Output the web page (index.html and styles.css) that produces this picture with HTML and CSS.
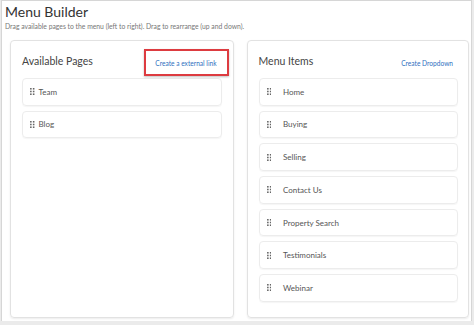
FILE: index.html
```html
<!DOCTYPE html>
<html>
<head>
<meta charset="utf-8">
<link rel="stylesheet" href="styles.css">
</head>
<body>
<div class="frame">
  <h1 class="title">Menu Builder</h1>
  <p class="subtitle">Drag available pages to the menu (left to right). Drag to rearrange (up and down).</p>
  <div class="columns">
    <section class="card">
      <div class="card-head">
        <h2 class="card-title">Available Pages</h2>
        <a class="link highlighted">Create a external link</a>
      </div>
      <ul class="list">
        <li class="item"><svg class="grip" viewBox="0 0 5 8"><rect x="0" y="0" width="1.8" height="1.8"/><rect x="3.2" y="0" width="1.8" height="1.8"/><rect x="0" y="3.1" width="1.8" height="1.8"/><rect x="3.2" y="3.1" width="1.8" height="1.8"/><rect x="0" y="6.2" width="1.8" height="1.8"/><rect x="3.2" y="6.2" width="1.8" height="1.8"/></svg><span>Team</span></li>
        <li class="item"><svg class="grip" viewBox="0 0 5 8"><rect x="0" y="0" width="1.8" height="1.8"/><rect x="3.2" y="0" width="1.8" height="1.8"/><rect x="0" y="3.1" width="1.8" height="1.8"/><rect x="3.2" y="3.1" width="1.8" height="1.8"/><rect x="0" y="6.2" width="1.8" height="1.8"/><rect x="3.2" y="6.2" width="1.8" height="1.8"/></svg><span>Blog</span></li>
      </ul>
    </section>
    <section class="card card-right">
      <div class="card-head">
        <h2 class="card-title">Menu Items</h2>
        <a class="link">Create Dropdown</a>
      </div>
      <ul class="list list-menu">
        <li class="item"><svg class="grip" viewBox="0 0 5 8"><rect x="0" y="0" width="1.8" height="1.8"/><rect x="3.2" y="0" width="1.8" height="1.8"/><rect x="0" y="3.1" width="1.8" height="1.8"/><rect x="3.2" y="3.1" width="1.8" height="1.8"/><rect x="0" y="6.2" width="1.8" height="1.8"/><rect x="3.2" y="6.2" width="1.8" height="1.8"/></svg><span>Home</span></li>
        <li class="item"><svg class="grip" viewBox="0 0 5 8"><rect x="0" y="0" width="1.8" height="1.8"/><rect x="3.2" y="0" width="1.8" height="1.8"/><rect x="0" y="3.1" width="1.8" height="1.8"/><rect x="3.2" y="3.1" width="1.8" height="1.8"/><rect x="0" y="6.2" width="1.8" height="1.8"/><rect x="3.2" y="6.2" width="1.8" height="1.8"/></svg><span>Buying</span></li>
        <li class="item"><svg class="grip" viewBox="0 0 5 8"><rect x="0" y="0" width="1.8" height="1.8"/><rect x="3.2" y="0" width="1.8" height="1.8"/><rect x="0" y="3.1" width="1.8" height="1.8"/><rect x="3.2" y="3.1" width="1.8" height="1.8"/><rect x="0" y="6.2" width="1.8" height="1.8"/><rect x="3.2" y="6.2" width="1.8" height="1.8"/></svg><span>Selling</span></li>
        <li class="item"><svg class="grip" viewBox="0 0 5 8"><rect x="0" y="0" width="1.8" height="1.8"/><rect x="3.2" y="0" width="1.8" height="1.8"/><rect x="0" y="3.1" width="1.8" height="1.8"/><rect x="3.2" y="3.1" width="1.8" height="1.8"/><rect x="0" y="6.2" width="1.8" height="1.8"/><rect x="3.2" y="6.2" width="1.8" height="1.8"/></svg><span>Contact Us</span></li>
        <li class="item"><svg class="grip" viewBox="0 0 5 8"><rect x="0" y="0" width="1.8" height="1.8"/><rect x="3.2" y="0" width="1.8" height="1.8"/><rect x="0" y="3.1" width="1.8" height="1.8"/><rect x="3.2" y="3.1" width="1.8" height="1.8"/><rect x="0" y="6.2" width="1.8" height="1.8"/><rect x="3.2" y="6.2" width="1.8" height="1.8"/></svg><span>Property Search</span></li>
        <li class="item"><svg class="grip" viewBox="0 0 5 8"><rect x="0" y="0" width="1.8" height="1.8"/><rect x="3.2" y="0" width="1.8" height="1.8"/><rect x="0" y="3.1" width="1.8" height="1.8"/><rect x="3.2" y="3.1" width="1.8" height="1.8"/><rect x="0" y="6.2" width="1.8" height="1.8"/><rect x="3.2" y="6.2" width="1.8" height="1.8"/></svg><span>Testimonials</span></li>
        <li class="item"><svg class="grip" viewBox="0 0 5 8"><rect x="0" y="0" width="1.8" height="1.8"/><rect x="3.2" y="0" width="1.8" height="1.8"/><rect x="0" y="3.1" width="1.8" height="1.8"/><rect x="3.2" y="3.1" width="1.8" height="1.8"/><rect x="0" y="6.2" width="1.8" height="1.8"/><rect x="3.2" y="6.2" width="1.8" height="1.8"/></svg><span>Webinar</span></li>
      </ul>
    </section>
  </div>
</div>
</body>
</html>
```
FILE: styles.css
```css
html, body {
  margin: 0;
  padding: 0;
  background: #ebebeb;
}
body {
  width: 474px;
  height: 325px;
  overflow: hidden;
  font-family: Lato, "Open Sans", sans-serif;
  color: #444;
}
.frame {
  box-sizing: border-box;
  margin: 0 2px 0 1px;
  height: 321px;
  background: #fff;
  border: 1px solid #d6d6d6;
  border-bottom: none;
  padding: 3px 2px 0 3px;
}
.title {
  margin: 0;
  font-size: 14px;
  font-weight: 400;
  line-height: 16px;
  color: #333;
}
.subtitle {
  margin: 2px 0 0;
  font-size: 6.8px;
  line-height: 9px;
  color: #777;
}
.columns {
  display: flex;
  gap: 13px;
  margin-top: 9px;
  padding-left: 5px;
}
.card {
  box-sizing: border-box;
  width: 224px;
  height: 278px;
  border: 1px solid #e2e2e2;
  border-radius: 4px;
  box-shadow: 0 1px 2px rgba(0,0,0,0.08);
  padding: 10px 11px 0 11px;
}
.card-right {
  width: 223px;
  padding-right: 10px;
}
.card-head {
  display: flex;
  align-items: center;
  justify-content: space-between;
  height: 20px;
  margin-bottom: 7px;
}
.card-title {
  margin: 0;
  font-size: 10.5px;
  font-weight: 400;
  color: #444;
}
.link {
  position: relative;
  font-size: 6.6px;
  color: #2f6fc0;
  margin-right: 5px;
  margin-top: 3px;
}
.highlighted::after {
  content: "";
  position: absolute;
  left: -11px;
  right: -12px;
  top: -10px;
  bottom: -9px;
  border: 2px solid #dd3b40;
  box-shadow: 0 1px 2px rgba(0,0,0,0.25);
}
.list {
  list-style: none;
  margin: 0;
  padding: 0;
  display: flex;
  flex-direction: column;
  gap: 5.2px;
}
.item {
  box-sizing: border-box;
  height: 27.5px;
  display: flex;
  align-items: center;
  border: 1px solid #ececec;
  border-radius: 4px;
  box-shadow: 0 1px 1px rgba(0,0,0,0.04);
  padding-left: 7px;
  font-size: 8px;
  color: #555;
}
.grip {
  width: 4.5px;
  height: 7px;
  fill: #666;
  margin-right: 4px;
  flex: none;
}
.list-menu .grip {
  margin-right: 12px;
}
```
